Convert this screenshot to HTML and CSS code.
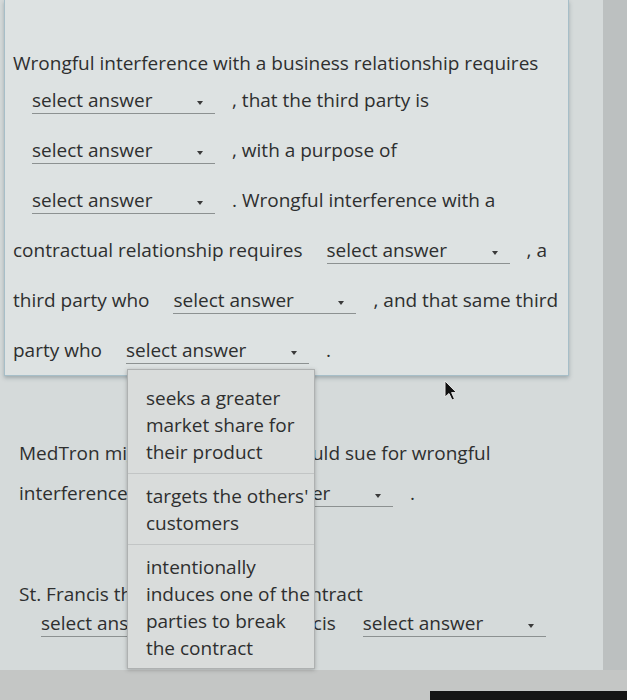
FILE: index.html
```html
<!DOCTYPE html>
<html lang="en">
<head>
    <meta charset="UTF-8">
    <meta name="viewport" content="width=device-width, initial-scale=1.0">
    <title>Wrongful Interference</title>
    <link rel="stylesheet" href="styles.css">
</head>
<body>
    <div class="screen">
        <div class="panel">
            <div class="card">
                <div class="question">Wrongful interference with a business relationship requires <span class="blank">select answer</span>, that the third party is <span class="blank">select answer</span>, with a purpose of <span class="blank">select answer</span>. Wrongful interference with a contractual relationship requires <span class="blank">select answer</span>, a third party who <span class="blank">select answer</span>, and that same third party who <span class="blank is-open">select answer<span class="options"><span class="option">seeks a greater market share for their product</span><span class="option">targets the others' customers</span><span class="option">intentionally induces one of the parties to break the contract</span></span></span>.</div>
            </div>

            <div class="question question-plain">MedTron might assume that it could sue for wrongful interference with a <span class="blank">select answer</span>.</div>

            <div class="question question-plain question-compact">St. Francis thinks it had a valid contract <span class="blank">select answer</span> St. Francis <span class="blank">select answer</span></div>

            <svg class="cursor" width="14" height="22" viewBox="0 0 14 22" aria-hidden="true">
                <path d="M1 1 L1 17 L5 13.5 L8 20 L10.5 19 L7.6 12.6 L12.5 12.6 Z" fill="#111" stroke="#e8e8e8" stroke-width="1"/>
            </svg>
        </div>
        <div class="edge"></div>
    </div>
    <div class="bezel">
        <div class="bezel-dark"></div>
    </div>
</body>
</html>
```

FILE: styles.css
```css
body {
    margin: 0;
    width: 627px;
    height: 700px;
    overflow: hidden;
    background: #c4c6c5;
    font-family: 'Open Sans', 'Liberation Sans', sans-serif;
    color: #2e2f2f;
}

.screen {
    display: flex;
    height: 670px;
}

.panel {
    position: relative;
    width: 603px;
    background: #d5dada;
}

.edge {
    flex: 1;
    background: #bcc0c0;
}

.bezel {
    height: 30px;
    display: flex;
    justify-content: flex-end;
    align-items: flex-end;
}

.bezel-dark {
    width: 197px;
    height: 9px;
    background: #151515;
}

/* question card */
.card {
    width: 565px;
    margin-left: 4px;
    box-sizing: border-box;
    padding: 51px 2px 0 8px;
    background: #dde2e2;
    border: 1px solid #a6bec8;
    border-top: none;
    box-shadow: 0 2px 4px rgba(60, 80, 90, 0.35);
}

.question {
    font-size: 19px;
    line-height: 24px;
}

.question-plain {
    padding: 0 34px 0 19px;
    margin-top: 65px;
}

.question-plain + .question-plain {
    margin-top: 64px;
}

/* inline select */
.blank {
    position: relative;
    display: inline-block;
    width: 183px;
    margin: 15px 17px 11px 19px;
    line-height: 20px;
    padding-bottom: 3px;
    border-bottom: 1px solid #8c9191;
    white-space: nowrap;
}

.question-plain .blank {
    margin-top: 18px;
}

.question-compact .blank {
    margin: 7px 17px 4px 22px;
}

.blank::after {
    content: "";
    position: absolute;
    right: 12px;
    top: 11px;
    border-left: 3.5px solid transparent;
    border-right: 3.5px solid transparent;
    border-top: 4px solid #3a3a3a;
}

/* open dropdown list */
.options {
    position: absolute;
    z-index: 10;
    top: 29px;
    left: 1px;
    display: block;
    width: 188px;
    box-sizing: border-box;
    padding-top: 6px;
    background: #d9dcdb;
    border: 1px solid #aeb1b1;
    box-shadow: 0 1px 4px rgba(0, 0, 0, 0.25);
    white-space: normal;
    line-height: 27px;
}

.option {
    display: block;
    padding: 9px 2px 7px 18px;
}

.option + .option {
    border-top: 1px solid #c2c5c5;
}

.option:last-child {
    padding-bottom: 6px;
}

.cursor {
    position: absolute;
    left: 444px;
    top: 380px;
}
```
